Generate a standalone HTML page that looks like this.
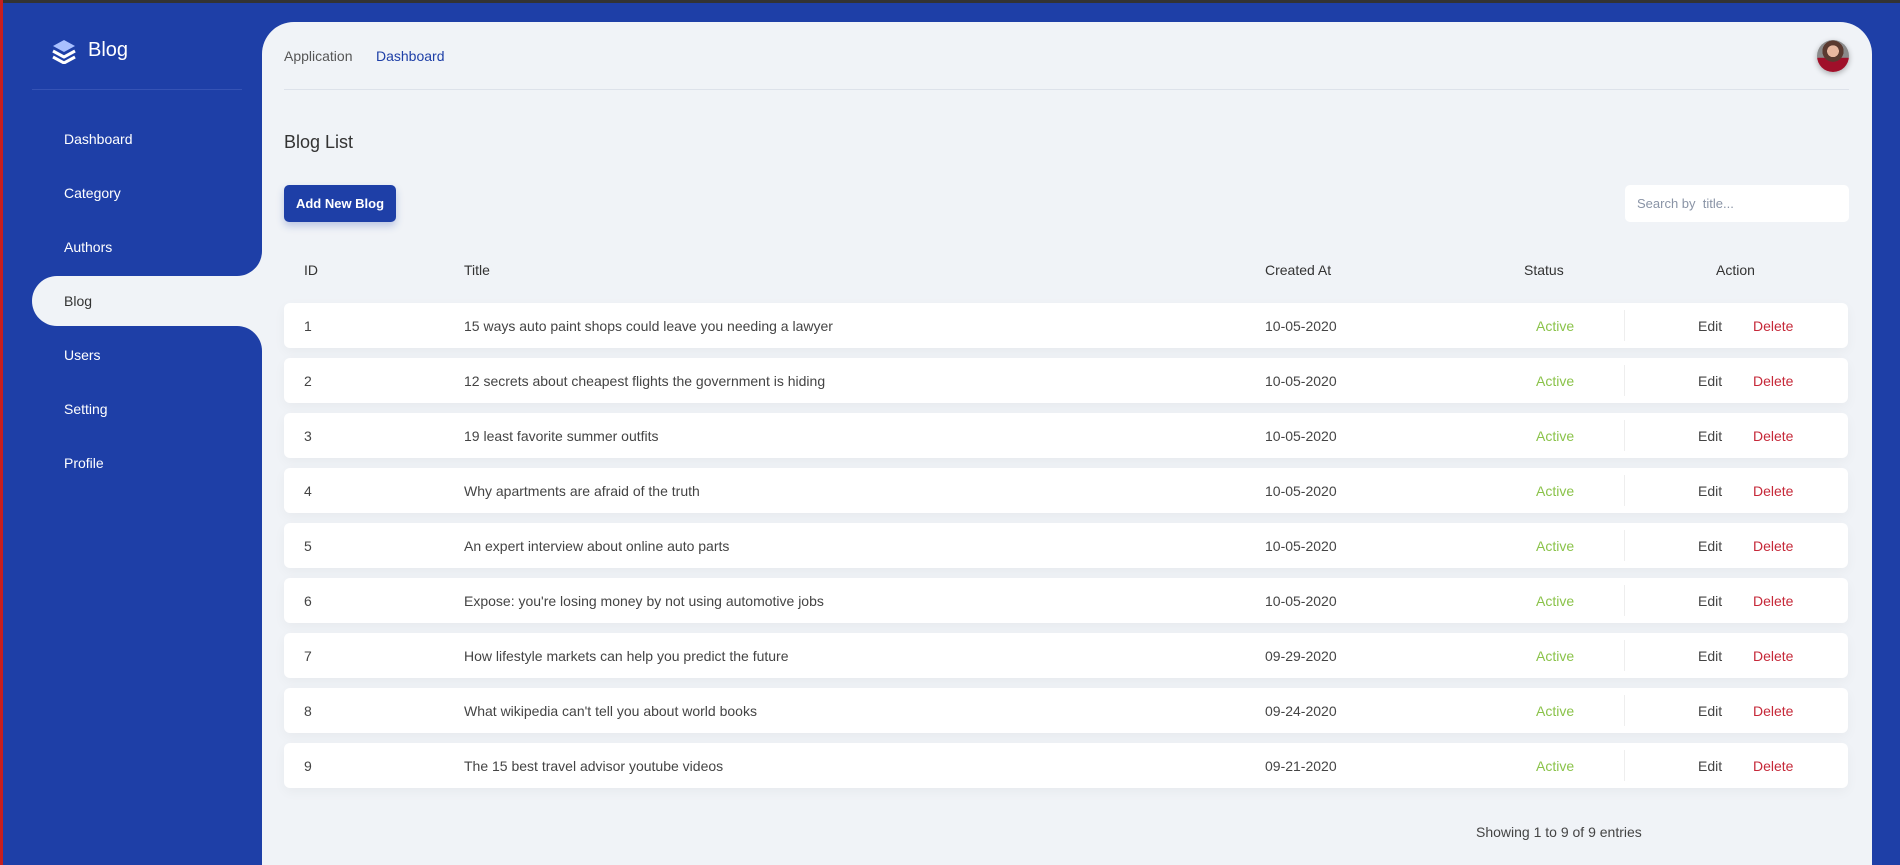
<!DOCTYPE html>
<html style="overflow:hidden"><head><meta charset="utf-8"><style>
*{margin:0;padding:0;box-sizing:border-box}
html,body{width:1900px;height:865px;overflow:hidden}
body{background:#1e3fa7;font-family:"Liberation Sans",sans-serif;position:relative;}
.topl{position:absolute;left:0;top:0;width:1900px;height:3px;background:#333}
.redl{position:absolute;left:0;top:0;width:3px;height:865px;background:#c81e1e}
.panel{position:absolute;left:262px;top:22px;width:1610px;height:843px;background:#f0f3f7;border-radius:32px 32px 0 0}
.abs{position:absolute;white-space:nowrap}
.nav{position:absolute;left:64px;color:#fff;font-size:14px;transform:translateY(-50%)}
.pill{position:absolute;left:32px;top:276px;width:240px;height:50px;background:#f0f3f7;border-radius:25px 0 0 25px}
.c1{position:absolute;left:237px;top:251px;width:25px;height:25px;background:#f0f3f7}
.c1 i{display:block;width:25px;height:25px;background:#1e3fa7;border-radius:0 0 25px 0}
.c2{position:absolute;left:237px;top:326px;width:25px;height:25px;background:#f0f3f7}
.c2 i{display:block;width:25px;height:25px;background:#1e3fa7;border-radius:0 25px 0 0}
.row{position:absolute;left:284px;width:1564px;height:45px;background:#fff;border-radius:6px;box-shadow:0 4px 12px rgba(0,0,0,0.04);font-size:14px;color:#444}
.row span{position:absolute;top:50%;transform:translateY(-50%);white-space:nowrap}
.row .dv{position:absolute;left:1340px;top:7px;height:31px;border-left:1px solid #eee}
.th{position:absolute;top:270px;transform:translateY(-50%);font-size:14px;color:#333}
</style></head><body>
<div class="topl"></div>
<div class="redl"></div>
<svg class="abs" style="left:51px;top:39px" width="26" height="25" viewBox="0 0 26 25">
<path d="M13 1 L24 7 L13 13 L2 7 Z" fill="#a9c0ff"/>
<path d="M2 12 L13 18 L24 12" fill="none" stroke="#fff" stroke-width="3" stroke-linejoin="round"/>
<path d="M2 18 L13 24 L24 18" fill="none" stroke="#fff" stroke-width="3" stroke-linejoin="round"/>
</svg>
<div class="abs" style="left:88px;top:39px;color:#fff;font-size:20px">Blog</div>
<div class="abs" style="left:32px;top:89px;width:210px;height:1px;background:#3553b5"></div>
<div class="panel"></div>
<div class="c1"><i></i></div><div class="c2"><i></i></div>
<div class="pill"></div>
<div class="nav" style="top:139px">Dashboard</div>
<div class="nav" style="top:193px">Category</div>
<div class="nav" style="top:247px">Authors</div>
<div class="nav" style="top:301px;color:#333">Blog</div>
<div class="nav" style="top:355px">Users</div>
<div class="nav" style="top:409px">Setting</div>
<div class="nav" style="top:463px">Profile</div>

<div class="abs" style="left:284px;top:48px;font-size:14px;color:#555">Application</div>
<div class="abs" style="left:376px;top:48px;font-size:14px;color:#1e3fa7">Dashboard</div>
<div class="abs" style="left:1817px;top:40px;width:32px;height:32px;border-radius:50%;background:radial-gradient(circle at 50% 35%,#e8b8a0 0 22%,#5a3a30 23% 40%,transparent 41%),linear-gradient(#8a8a8a 0 55%,#a0102a 56%);box-shadow:0 2px 6px rgba(0,0,0,.3)"></div>
<div class="abs" style="left:284px;top:89px;width:1565px;height:1px;background:#dde2ea"></div>
<div class="abs" style="left:284px;top:132px;font-size:18px;color:#333">Blog List</div>
<div class="abs" style="left:284px;top:185px;width:112px;height:37px;background:#1e3fa7;border-radius:5px;color:#fff;font-size:13px;font-weight:bold;line-height:37px;text-align:center;box-shadow:0 4px 8px rgba(30,63,167,.25)">Add New Blog</div>
<div class="abs" style="left:1625px;top:185px;width:224px;height:37px;background:#fff;border-radius:5px;color:#8a94a6;font-size:13px;line-height:37px;padding-left:12px">Search by &nbsp;title...</div>

<div class="th" style="left:304px">ID</div>
<div class="th" style="left:464px">Title</div>
<div class="th" style="left:1265px">Created At</div>
<div class="th" style="left:1524px">Status</div>
<div class="th" style="left:1716px">Action</div>

<div class="row" style="top:303px"><span style="left:20px">1</span><span style="left:180px">15 ways auto paint shops could leave you needing a lawyer</span><span style="left:981px">10-05-2020</span><span style="left:1252px;color:#8bc34a">Active</span><i class="dv"></i><span style="left:1414px">Edit</span><span style="left:1469px;color:#c62838">Delete</span></div>
<div class="row" style="top:358px"><span style="left:20px">2</span><span style="left:180px">12 secrets about cheapest flights the government is hiding</span><span style="left:981px">10-05-2020</span><span style="left:1252px;color:#8bc34a">Active</span><i class="dv"></i><span style="left:1414px">Edit</span><span style="left:1469px;color:#c62838">Delete</span></div>
<div class="row" style="top:413px"><span style="left:20px">3</span><span style="left:180px">19 least favorite summer outfits</span><span style="left:981px">10-05-2020</span><span style="left:1252px;color:#8bc34a">Active</span><i class="dv"></i><span style="left:1414px">Edit</span><span style="left:1469px;color:#c62838">Delete</span></div>
<div class="row" style="top:468px"><span style="left:20px">4</span><span style="left:180px">Why apartments are afraid of the truth</span><span style="left:981px">10-05-2020</span><span style="left:1252px;color:#8bc34a">Active</span><i class="dv"></i><span style="left:1414px">Edit</span><span style="left:1469px;color:#c62838">Delete</span></div>
<div class="row" style="top:523px"><span style="left:20px">5</span><span style="left:180px">An expert interview about online auto parts</span><span style="left:981px">10-05-2020</span><span style="left:1252px;color:#8bc34a">Active</span><i class="dv"></i><span style="left:1414px">Edit</span><span style="left:1469px;color:#c62838">Delete</span></div>
<div class="row" style="top:578px"><span style="left:20px">6</span><span style="left:180px">Expose: you're losing money by not using automotive jobs</span><span style="left:981px">10-05-2020</span><span style="left:1252px;color:#8bc34a">Active</span><i class="dv"></i><span style="left:1414px">Edit</span><span style="left:1469px;color:#c62838">Delete</span></div>
<div class="row" style="top:633px"><span style="left:20px">7</span><span style="left:180px">How lifestyle markets can help you predict the future</span><span style="left:981px">09-29-2020</span><span style="left:1252px;color:#8bc34a">Active</span><i class="dv"></i><span style="left:1414px">Edit</span><span style="left:1469px;color:#c62838">Delete</span></div>
<div class="row" style="top:688px"><span style="left:20px">8</span><span style="left:180px">What wikipedia can't tell you about world books</span><span style="left:981px">09-24-2020</span><span style="left:1252px;color:#8bc34a">Active</span><i class="dv"></i><span style="left:1414px">Edit</span><span style="left:1469px;color:#c62838">Delete</span></div>
<div class="row" style="top:743px"><span style="left:20px">9</span><span style="left:180px">The 15 best travel advisor youtube videos</span><span style="left:981px">09-21-2020</span><span style="left:1252px;color:#8bc34a">Active</span><i class="dv"></i><span style="left:1414px">Edit</span><span style="left:1469px;color:#c62838">Delete</span></div>

<div class="abs" style="left:1476px;top:824px;font-size:14px;color:#444">Showing 1 to 9 of 9 entries</div>
</body></html>
